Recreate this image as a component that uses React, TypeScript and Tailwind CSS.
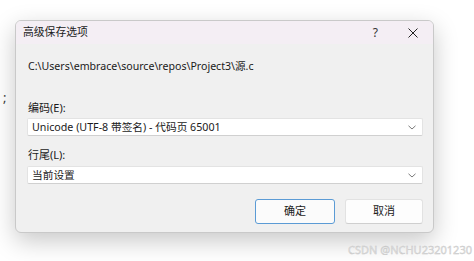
import React from 'react';

const font = { fontFamily: '"Noto Sans", "Noto Sans CJK SC", sans-serif' };

function Chevron() {
  return (
    <svg width="8" height="5" viewBox="0 0 8 5" className="shrink-0">
      <path d="M0.5 0.8 L4 4 L7.5 0.8" fill="none" stroke="#6b6b6b" strokeWidth="0.9" />
    </svg>
  );
}

function Select({ value }: { value: string }) {
  return (
    <div className="flex items-center justify-between h-[18px] w-[396px] bg-white border border-[#e3e3e3] border-b-[#d0d0d0] rounded-[2px] pl-[4px] pr-[6px]">
      <span className="text-[10.7px] leading-none text-[#1a1a1a]">{value}</span>
      <Chevron />
    </div>
  );
}

export default function App() {
  return (
    <div className="relative w-[474px] h-[261px] bg-white overflow-hidden pt-[20px] pl-[15px]" style={font}>
      {/* stray text behind the dialog */}
      <span className="absolute left-[3px] top-[88px] text-[13px] text-[#333]">;</span>

      <div className="w-[419px] h-[213px] bg-[#f0f0f0] rounded-[6px] border border-[#c9c9c9] shadow-[0_8px_24px_rgba(0,0,0,0.22)] flex flex-col overflow-hidden">
        {/* title bar */}
        <div className="h-[23px] bg-[#f4eef4] flex items-center pl-[7px] shrink-0">
          <span className="text-[10.8px] text-[#1a1a1a] leading-none">高级保存选项</span>
          <span className="ml-auto text-[12px] text-[#333] leading-none">?</span>
          <svg width="10" height="10" viewBox="0 0 10 10" className="ml-[30px] mr-[15px]">
            <path d="M0.5 0.5 L9.5 9.5 M9.5 0.5 L0.5 9.5" stroke="#222" strokeWidth="1" />
          </svg>
        </div>

        {/* body */}
        <div className="flex flex-col pl-[11px]">
          <span className="mt-[14px] pl-[1px] text-[10.6px] leading-[16px] text-[#1a1a1a]">
            C:\Users\embrace\source\repos\Project3\源.c
          </span>
          <span className="mt-[26px] pl-[1px] text-[11px] leading-[16px] text-[#1a1a1a]">编码(E):</span>
          <div className="mt-[2px]">
            <Select value="Unicode (UTF-8 带签名) - 代码页 65001" />
          </div>
          <span className="mt-[11px] pl-[1px] text-[11px] leading-[16px] text-[#1a1a1a]">行尾(L):</span>
          <div className="mt-[3px]">
            <Select value="当前设置" />
          </div>
          <div className="flex justify-end gap-[10px] mt-[15px] pr-[10px]">
            <button className="w-[80px] h-[25px] bg-[#fbfbfb] border border-[#5b9bd5] rounded-[3px] text-[11px] text-[#1a1a1a]">
              确定
            </button>
            <button className="w-[78px] h-[25px] bg-[#fdfdfd] border border-[#e2e2e2] border-b-[#cfcfcf] rounded-[3px] text-[11px] text-[#1a1a1a]">
              取消
            </button>
          </div>
        </div>
      </div>

      {/* watermark */}
      <span className="absolute left-[348px] top-[243px] whitespace-nowrap text-[11px] leading-[14px] text-[#e2e2e2]" style={{ WebkitTextStroke: '0.35px #c4c4c4' }}>
        CSDN @NCHU23201230
      </span>
    </div>
  );
}
